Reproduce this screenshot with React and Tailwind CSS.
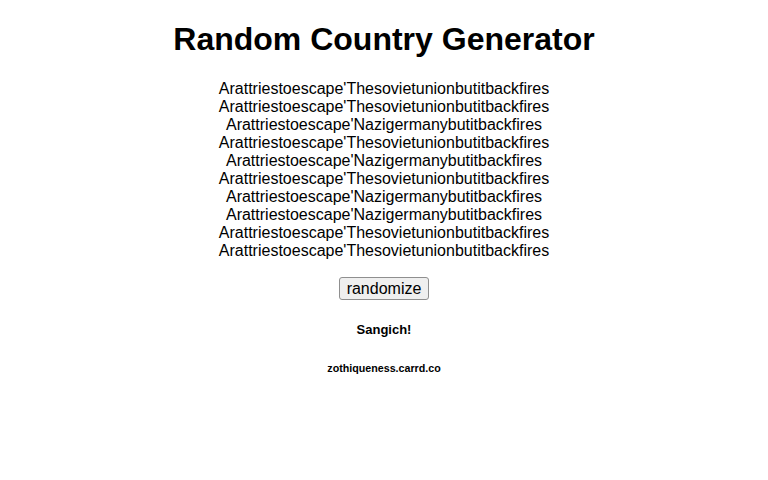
export default function App() {
  const lines = [
    "Arattriestoescape'Thesovietunionbutitbackfires",
    "Arattriestoescape'Thesovietunionbutitbackfires",
    "Arattriestoescape'Nazigermanybutitbackfires",
    "Arattriestoescape'Thesovietunionbutitbackfires",
    "Arattriestoescape'Nazigermanybutitbackfires",
    "Arattriestoescape'Thesovietunionbutitbackfires",
    "Arattriestoescape'Nazigermanybutitbackfires",
    "Arattriestoescape'Nazigermanybutitbackfires",
    "Arattriestoescape'Thesovietunionbutitbackfires",
    "Arattriestoescape'Thesovietunionbutitbackfires",
  ];
  return (
    <div className="min-h-[480px] bg-white text-black text-center font-['Liberation_Sans',Arial,sans-serif]">
      <h1 className="pt-[21px] text-[32px] font-bold leading-[37px]">Random Country Generator</h1>
      <div className="mt-[22px] text-[16px] leading-[18px]">
        {lines.map((l, i) => (
          <div key={i}>{l}</div>
        ))}
      </div>
      <div className="mt-[17px] flex justify-center">
        <button className="h-[23px] w-[90px] text-[16px] leading-[18px] bg-[#efefef] border border-[#8f8f8f] rounded-[3px] text-black">
          randomize
        </button>
      </div>
      <h5 className="mt-[22px] text-[13px] font-bold leading-[15px]">Sangich!</h5>
      <h6 className="mt-[25px] text-[10.7px] font-bold leading-[12px]">zothiqueness.carrd.co</h6>
    </div>
  );
}
